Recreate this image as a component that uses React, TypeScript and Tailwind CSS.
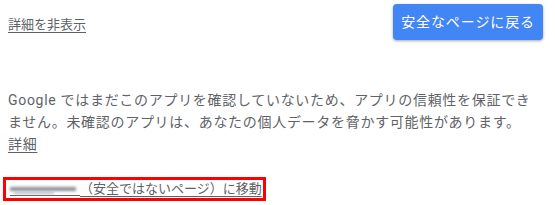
export default function App() {
  return (
    <div
      className="w-[555px] h-[205px] bg-white px-2 text-[#5f6368] overflow-hidden"
      style={{ fontFamily: "Roboto, 'Noto Sans CJK JP', sans-serif" }}
    >
      <div className="flex justify-between items-start pt-1 pr-1">
        <a href="#" className="mt-[12px] text-[13px] leading-[18px] underline underline-offset-[3px] text-[#5f6368]">
          詳細を非表示
        </a>
        <button className="h-9 px-2 rounded bg-[#4285f4] text-white text-[14px] tracking-[0.9px] shadow-[0_1px_3px_rgba(0,0,0,0.35)]">
          安全なページに戻る
        </button>
      </div>
      <p className="mt-[49px] pr-2 text-[14px] leading-[22px] tracking-[0.7px]">
        Google ではまだこのアプリを確認していないため、アプリの信頼性を保証できません。未確認のアプリは、あなたの個人データを脅かす可能性があります。
        <br />
        <a href="#" className="underline underline-offset-[3px]">詳細</a>
      </p>
      <div className="mt-[22px] -ml-[5px] flex items-center h-6 w-[263px] border-[3px] border-[#ff0000] pl-1">
        <span className="relative w-[70px] h-[14px] shrink-0 border-b border-[#5f6368]">
          <span className="absolute left-0 right-1 top-[5px] h-[4px] bg-[#8a8f95] blur-[1.5px]" />
          <span className="absolute left-1 w-[40px] top-[10px] h-[2px] bg-[#b9bdc1] blur-[1px]" />
        </span>
        <a href="#" className="text-[13px] leading-[18px] underline underline-offset-[3px] whitespace-nowrap">
          （安全ではないページ）に移動
        </a>
      </div>
    </div>
  );
}
